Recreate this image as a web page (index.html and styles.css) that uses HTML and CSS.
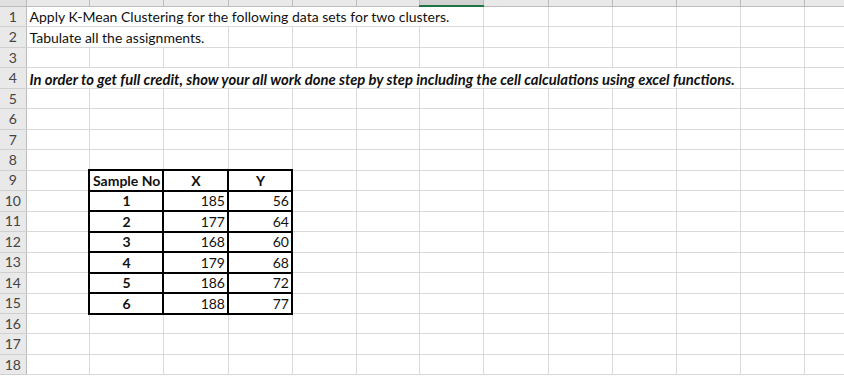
FILE: index.html
```html
<!DOCTYPE html>
<html lang="en">
<head>
  <meta charset="UTF-8">
  <title>K-Mean Clustering</title>
  <link rel="stylesheet" href="styles.css">
</head>
<body>
  <table class="sheet">
    <colgroup>
      <col class="c-row">
      <col class="c-a">
      <col class="c-b">
      <col class="c-c">
      <col class="c-d"><col class="c-d"><col class="c-f"><col class="c-d"><col class="c-i">
      <col class="c-d"><col class="c-d"><col class="c-d"><col class="c-d">
    </colgroup>
    <thead>
      <tr class="head">
        <th class="corner"></th>
        <th>A</th><th>B</th><th>C</th><th>D</th><th>E</th><th>F</th>
        <th class="sel">G</th><th>H</th><th>I</th><th>J</th><th>K</th><th>L</th><th>M</th>
      </tr>
    </thead>
    <tbody>
      <tr><th>1</th><td colspan="7" class="txt">Apply K-Mean Clustering for the following data sets for two clusters.</td><td></td><td></td><td></td><td></td><td></td><td></td></tr>
      <tr><th>2</th><td colspan="3" class="txt">Tabulate all the assignments.</td><td></td><td></td><td></td><td></td><td></td><td></td><td></td><td></td><td></td><td></td></tr>
      <tr><th>3</th><td></td><td></td><td></td><td></td><td></td><td></td><td></td><td></td><td></td><td></td><td></td><td></td><td></td></tr>
      <tr><th>4</th><td colspan="11" class="txt note">In order to get full credit, show your all work done step by step including the cell calculations using excel functions.</td><td></td><td></td></tr>
      <tr><th>5</th><td></td><td></td><td></td><td></td><td></td><td></td><td></td><td></td><td></td><td></td><td></td><td></td><td></td></tr>
      <tr><th>6</th><td></td><td></td><td></td><td></td><td></td><td></td><td></td><td></td><td></td><td></td><td></td><td></td><td></td></tr>
      <tr><th>7</th><td></td><td></td><td></td><td></td><td></td><td></td><td></td><td></td><td></td><td></td><td></td><td></td><td></td></tr>
      <tr><th>8</th><td></td><td></td><td></td><td></td><td></td><td></td><td></td><td></td><td></td><td></td><td></td><td></td><td></td></tr>
      <tr><th>9</th><td></td><td class="box hd">Sample No</td><td class="box hd">X</td><td class="box hd">Y</td><td></td><td></td><td></td><td></td><td></td><td></td><td></td><td></td><td></td></tr>
      <tr><th>10</th><td></td><td class="box hd">1</td><td class="box num">185</td><td class="box num">56</td><td></td><td></td><td></td><td></td><td></td><td></td><td></td><td></td><td></td></tr>
      <tr><th>11</th><td></td><td class="box hd">2</td><td class="box num">177</td><td class="box num">64</td><td></td><td></td><td></td><td></td><td></td><td></td><td></td><td></td><td></td></tr>
      <tr><th>12</th><td></td><td class="box hd">3</td><td class="box num">168</td><td class="box num">60</td><td></td><td></td><td></td><td></td><td></td><td></td><td></td><td></td><td></td></tr>
      <tr><th>13</th><td></td><td class="box hd">4</td><td class="box num">179</td><td class="box num">68</td><td></td><td></td><td></td><td></td><td></td><td></td><td></td><td></td><td></td></tr>
      <tr><th>14</th><td></td><td class="box hd">5</td><td class="box num">186</td><td class="box num">72</td><td></td><td></td><td></td><td></td><td></td><td></td><td></td><td></td><td></td></tr>
      <tr><th>15</th><td></td><td class="box hd">6</td><td class="box num">188</td><td class="box num">77</td><td></td><td></td><td></td><td></td><td></td><td></td><td></td><td></td><td></td></tr>
      <tr><th>16</th><td></td><td></td><td></td><td></td><td></td><td></td><td></td><td></td><td></td><td></td><td></td><td></td><td></td></tr>
      <tr><th>17</th><td></td><td></td><td></td><td></td><td></td><td></td><td></td><td></td><td></td><td></td><td></td><td></td><td></td></tr>
      <tr><th>18</th><td></td><td></td><td></td><td></td><td></td><td></td><td></td><td></td><td></td><td></td><td></td><td></td><td></td></tr>
    </tbody>
  </table>
</body>
</html>
```

FILE: styles.css
```css
body {
  margin: 0;
  background: #fff;
  overflow: hidden;
  font-family: Lato, "Open Sans", sans-serif;
  color: #111;
}
.sheet {
  border-collapse: collapse;
  table-layout: fixed;
  width: 868px;
  margin-top: -14px;
  font-size: 14px;
}
.c-row { width: 26px; }
.c-a { width: 63px; }
.c-b { width: 74px; }
.c-c { width: 65px; }
.c-d { width: 64px; }
.c-f { width: 63px; }
.c-i { width: 65px; }

.sheet tr {
  height: 20.47px;
}
.sheet td {
  padding: 0 2px 0 3px;
  border-right: 1px solid #d9d9d9;
  border-bottom: 1px solid #d9d9d9;
  white-space: nowrap;
  overflow: visible;
  line-height: 18px;
  vertical-align: bottom;
}

/* row numbers */
.sheet tbody th {
  background: #e9e9e9;
  border-right: 1px solid #bcbcbc;
  border-bottom: 1px solid #d0d0d0;
  font-weight: normal;
  color: #444;
  font-size: 14px;
  text-align: center;
  padding: 0;
  line-height: 18px;
}

/* column letters, mostly scrolled out of view */
.head {
  height: 21px;
}
.head th {
  background: #e9e9e9;
  border-right: 1px solid #bcbcbc;
  border-bottom: 1px solid #bcbcbc;
  font-weight: normal;
  color: #444;
  font-size: 14px;
  padding: 0;
  text-align: center;
  vertical-align: top;
  line-height: 18px;
}
.head th.sel {
  background: #d2d2d2;
  border-bottom: 2px solid #217346;
}
.head th.corner {
  background: #e0e0e0;
}

.note {
  font-weight: bold;
  font-style: italic;
  font-size: 14.8px;
}

/* sample data block */
.sheet td.box {
  border: 2px solid #000;
}
.sheet td.hd {
  text-align: center;
  font-weight: bold;
}
.sheet td.num {
  text-align: right;
}
```
